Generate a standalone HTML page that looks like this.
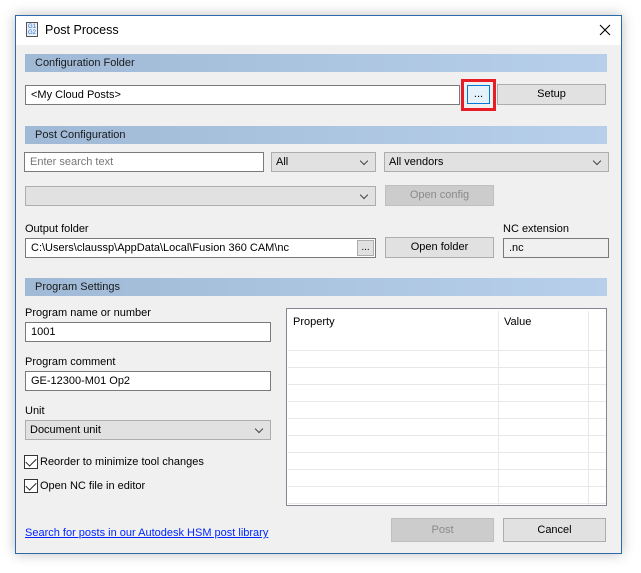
<!DOCTYPE html>
<html><head><meta charset="utf-8"><style>
*{box-sizing:border-box;margin:0;padding:0}
body{width:641px;height:573px;background:#fff;position:relative;overflow:hidden;font-family:"Liberation Sans",sans-serif;font-size:11px;color:#000}
.a{position:absolute}
.win{left:15px;top:15px;width:607px;height:539px;border:1px solid #2a6aab;background:#f0f0f0;box-shadow:0 0 12px rgba(0,0,0,.25)}
.title{left:16px;top:16px;width:605px;height:29px;background:#fff}
.hdr{height:18px;background:linear-gradient(90deg,#9fb9d6,#b7cfea);padding-left:10px;line-height:18px;color:#1a1a1a}
.inp{background:#fff;border:1px solid #7a7a7a;height:20px;line-height:18px;padding-left:5px}
.cb{background:#e1e1e1;border:1px solid #adadad;height:20px;line-height:18px;padding-left:4px}
.cb:after{content:"";position:absolute;right:8px;top:5px;width:5px;height:5px;border-right:1px solid #444;border-bottom:1px solid #444;transform:rotate(45deg)}
.btn{background:#e1e1e1;border:1px solid #adadad;text-align:center;height:21px;line-height:19px}
.dis{background:#cccccc;border-color:#bfbfbf;color:#8a8a8a}
.lbl{line-height:14px}
.chk{width:14px;height:14px;border:1px solid #333;background:#fff}
.chk:after{content:"";position:absolute;left:3px;top:0px;width:5px;height:9px;border-right:1.5px solid #222;border-bottom:1.5px solid #222;transform:rotate(45deg)}
</style></head><body>
<div class="a win"></div>
<div class="a title"></div>
<div class="a" style="left:26px;top:22px;width:12px;height:15px;border:1px solid #555;background:#e8f0fa;font-size:6px;line-height:6px;color:#2a6ad0;text-align:center;padding-top:1px">G1<br>G2</div>
<div class="a" style="left:45px;top:23px;font-size:12.5px">Post Process</div>
<svg class="a" style="left:599px;top:24px" width="12" height="12" viewBox="0 0 12 12"><path d="M1 1L11 11M11 1L1 11" stroke="#000" stroke-width="1.1"/></svg>

<div class="a hdr" style="left:25px;top:54px;width:582px">Configuration Folder</div>
<div class="a inp" style="left:25px;top:85px;width:435px;">&lt;My Cloud Posts&gt;</div>
<div class="a" style="left:461px;top:79px;width:35px;height:32px;border:3px solid #e81c24"></div>
<div class="a" style="left:467px;top:85px;width:23px;height:19px;border:1px solid #0078d7;background:#e5f1fb;text-align:center;line-height:16px">...</div>
<div class="a btn" style="left:497px;top:84px;width:109px">Setup</div>

<div class="a hdr" style="left:25px;top:126px;width:582px">Post Configuration</div>
<div class="a inp" style="left:24px;top:152px;width:240px;color:#777">Enter search text</div>
<div class="a cb" style="left:271px;top:152px;width:105px">All</div>
<div class="a cb" style="left:384px;top:152px;width:225px">All vendors</div>
<div class="a cb" style="left:25px;top:186px;width:351px"></div>
<div class="a btn dis" style="left:385px;top:185px;width:109px">Open config</div>

<div class="a lbl" style="left:25px;top:222px">Output folder</div>
<div class="a inp" style="left:25px;top:238px;width:351px">C:\Users\claussp\AppData\Local\Fusion 360 CAM\nc</div>
<div class="a" style="left:357px;top:240px;width:17px;height:16px;border:1px solid #adadad;background:#e1e1e1;text-align:center;line-height:13px;font-size:10px">...</div>
<div class="a btn" style="left:385px;top:237px;width:109px">Open folder</div>
<div class="a lbl" style="left:503px;top:222px">NC extension</div>
<div class="a inp" style="left:503px;top:238px;width:106px;background:#f0f0f0">.nc</div>

<div class="a hdr" style="left:25px;top:278px;width:582px">Program Settings</div>
<div class="a lbl" style="left:25px;top:306px">Program name or number</div>
<div class="a inp" style="left:25px;top:322px;width:246px">1001</div>
<div class="a lbl" style="left:25px;top:355px">Program comment</div>
<div class="a inp" style="left:25px;top:371px;width:246px">GE-12300-M01 Op2</div>
<div class="a lbl" style="left:25px;top:404px">Unit</div>
<div class="a cb" style="left:25px;top:420px;width:246px">Document unit</div>
<div class="a chk" style="left:24px;top:455px"></div>
<div class="a lbl" style="left:40px;top:455px">Reorder to minimize tool changes</div>
<div class="a chk" style="left:24px;top:479px"></div>
<div class="a lbl" style="left:40px;top:479px">Open NC file in editor</div>
<div class="a lbl" style="left:25px;top:526px;color:#0026ff;text-decoration:underline">Search for posts in our Autodesk HSM post library</div>

<div class="a" style="left:286px;top:308px;width:321px;height:198px;border:1px solid #828790;background:#fff;overflow:hidden">
<div class="a" style="left:6px;top:7px">Property</div>
<div class="a" style="left:217px;top:7px">Value</div>
<div class="a" style="left:211px;top:2px;width:1px;height:200px;background:#e8e8e8"></div>
<div class="a" style="left:301px;top:2px;width:1px;height:200px;background:#e8e8e8"></div>
<div class="a" style="left:1px;top:41px;width:318px;height:160px;background:repeating-linear-gradient(180deg,#e8e8e8 0 1px,transparent 1px 17px)"></div>
</div>

<div class="a btn dis" style="left:391px;top:518px;width:103px;height:24px;line-height:22px">Post</div>
<div class="a btn" style="left:503px;top:518px;width:103px;height:24px;line-height:22px">Cancel</div>
</body></html>
